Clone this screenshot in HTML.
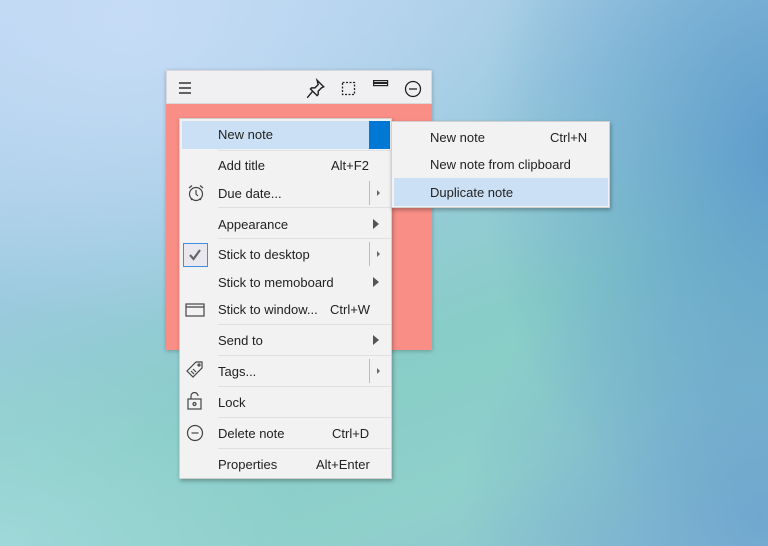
<!DOCTYPE html>
<html><head><meta charset="utf-8"><style>
*{margin:0;padding:0;box-sizing:border-box}
html,body{width:768px;height:546px;overflow:hidden}
body{position:relative;font-family:"Liberation Sans",sans-serif;font-size:13px;color:#222;
background:
radial-gradient(ellipse 420px 300px at 130px 20px,#c6dcf6 0%,rgba(198,220,246,0) 100%),
radial-gradient(ellipse 300px 400px at 780px 150px,#5f9ccc 0%,rgba(95,156,204,0) 100%),
radial-gradient(ellipse 300px 300px at 760px 520px,#72a8cf 0%,rgba(114,168,207,0) 100%),
radial-gradient(ellipse 300px 200px at 0px 546px,#9fd8d8 0%,rgba(159,216,216,0) 100%),
linear-gradient(160deg,#b9d3ef 0%,#9ccadf 35%,#88cdc7 60%,#8fd0cb 80%,#8cc0d2 100%);}
.a{position:absolute}
.win{left:166px;top:70px;width:266px;height:280px;background:#f98e86;box-shadow:0 1px 4px rgba(0,0,0,.25)}
.tb{left:0;top:0;width:266px;height:34px;background:#f0f0f2;border:1px solid #d8d8dc}
.menu{left:179px;top:118px;width:213px;height:361px;background:#f2f2f2;border:1px solid #d0d0d0;box-shadow:1px 2px 4px rgba(0,0,0,.3)}
.sub{left:391px;top:121px;width:219px;height:87px;background:#f2f2f2;border:1px solid #d0d0d0;box-shadow:1px 2px 4px rgba(0,0,0,.3)}
.t{position:absolute;line-height:16px;white-space:nowrap}
.sep{position:absolute;left:38px;width:173px;height:1px;background:#e0e0e0}
.vs{position:absolute;left:189px;width:1px;height:24px;background:#bcbcbc}
.arr{position:absolute;width:0;height:0;border-top:5px solid transparent;border-bottom:5px solid transparent;border-left:6px solid #555}
.sarr{position:absolute;width:0;height:0;border-top:3px solid transparent;border-bottom:3px solid transparent;border-left:3px solid #666}
</style></head><body>
<div class="a win">
 <div class="a tb">
  <svg class="a" style="left:11px;top:10px" width="14" height="14" viewBox="0 0 14 14" stroke="#333" stroke-width="1.5"><path d="M1 2h12M1 7h12M1 12h12"/></svg>
  <svg class="a" style="left:138px;top:7px" width="22" height="22" viewBox="0 0 20 20" fill="none" stroke="#222" stroke-width="1.3"><path d="M11 2l6 6-2 1-3 3 0 3-1 1-6-6 1-1 3 0 3-3z"/><path d="M7 12l-5 6"/></svg>
  <svg class="a" style="left:174px;top:10px" width="16" height="16" viewBox="0 0 16 16" fill="none" stroke="#222" stroke-width="1.3" stroke-dasharray="2 1.5"><rect x="1.5" y="1.5" width="12" height="12"/></svg>
  <svg class="a" style="left:206px;top:9px" width="16" height="8" viewBox="0 0 16 8" fill="none" stroke="#222" stroke-width="1.2"><rect x="0.6" y="0.6" width="14" height="5"/><path d="M1 3h13" stroke-width="2"/></svg>
  <svg class="a" style="left:237px;top:9px" width="18" height="18" viewBox="0 0 18 18" fill="none" stroke="#222" stroke-width="1.3"><circle cx="9" cy="9" r="7.5"/><path d="M5 9h8"/></svg>
 </div>
</div>

<div class="a menu">
 <div class="a" style="left:2px;top:2px;width:187px;height:28px;background:#cce0f5"></div>
 <div class="a" style="left:189px;top:2px;width:21px;height:28px;background:#0078d4"></div>
 <div class="t" style="left:38px;top:8px">New note</div>
 <div class="sep" style="top:31px"></div>
 <div class="t" style="left:38px;top:39px">Add title</div><div class="t" style="left:151px;top:39px">Alt+F2</div>
 <svg class="a" style="left:7px;top:65px" width="18" height="18" viewBox="0 0 18 18" fill="none" stroke="#444" stroke-width="1.2"><circle cx="9" cy="10" r="6.5"/><path d="M9 6v4l2 2M2 4l3-2.5M16 4l-3-2.5M4 16l1.5-1.5M14 16l-1.5-1.5"/></svg>
 <div class="t" style="left:38px;top:67px">Due date...</div>
 <div class="vs" style="top:62px"></div><div class="sarr" style="left:197px;top:71px"></div>
 <div class="sep" style="top:88px"></div>
 <div class="t" style="left:38px;top:98px">Appearance</div><div class="arr" style="left:193px;top:100px"></div>
 <div class="sep" style="top:119px"></div>
 <div class="a" style="left:3px;top:124px;width:25px;height:24px;background:#e8e8ee;border:1px solid #3d8ee0"></div>
 <svg class="a" style="left:7px;top:128px" width="16" height="16" viewBox="0 0 16 16" fill="none" stroke="#666" stroke-width="2.2"><path d="M3 8l3.5 4L13 3"/></svg>
 <div class="t" style="left:38px;top:128px">Stick to desktop</div>
 <div class="vs" style="top:123px"></div><div class="sarr" style="left:197px;top:132px"></div>
 <div class="t" style="left:38px;top:156px">Stick to memoboard</div><div class="arr" style="left:193px;top:158px"></div>
 <svg class="a" style="left:5px;top:183px" width="20" height="16" viewBox="0 0 20 16" fill="none" stroke="#444" stroke-width="1.2"><rect x="1" y="2" width="18" height="12"/><path d="M1 5h18"/></svg>
 <div class="t" style="left:38px;top:183px">Stick to window...</div><div class="t" style="left:150px;top:183px">Ctrl+W</div>
 <div class="sep" style="top:205px"></div>
 <div class="t" style="left:38px;top:214px">Send to</div><div class="arr" style="left:193px;top:216px"></div>
 <div class="sep" style="top:236px"></div>
 <svg class="a" style="left:6px;top:242px" width="18" height="18" viewBox="0 0 18 18" fill="none" stroke="#444" stroke-width="1.2"><path d="M10 1h6v6l-9 9-6-6z"/><circle cx="13" cy="4" r="1"/><path d="M5 10l3 3M7 8l3 3"/></svg>
 <div class="t" style="left:38px;top:245px">Tags...</div>
 <div class="vs" style="top:240px"></div><div class="sarr" style="left:197px;top:249px"></div>
 <div class="sep" style="top:267px"></div>
 <svg class="a" style="left:7px;top:273px" width="16" height="18" viewBox="0 0 16 18" fill="none" stroke="#444" stroke-width="1.2"><rect x="1" y="7" width="13" height="10"/><path d="M4 7V4a3.5 3.5 0 0 1 7 0"/><circle cx="7.5" cy="12" r="1.5"/></svg>
 <div class="t" style="left:38px;top:276px">Lock</div>
 <div class="sep" style="top:298px"></div>
 <svg class="a" style="left:6px;top:305px" width="18" height="18" viewBox="0 0 18 18" fill="none" stroke="#444" stroke-width="1.2"><circle cx="9" cy="9" r="7.5"/><path d="M5.5 9h7"/></svg>
 <div class="t" style="left:38px;top:307px">Delete note</div><div class="t" style="left:152px;top:307px">Ctrl+D</div>
 <div class="sep" style="top:329px"></div>
 <div class="t" style="left:38px;top:338px">Properties</div><div class="t" style="left:136px;top:338px">Alt+Enter</div>
</div>

<div class="a sub">
 <div class="t" style="left:38px;top:8px">New note</div><div class="t" style="left:158px;top:8px">Ctrl+N</div>
 <div class="t" style="left:38px;top:35px">New note from clipboard</div>
 <div class="a" style="left:2px;top:56px;width:214px;height:28px;background:#cce0f5"></div>
 <div class="t" style="left:38px;top:63px">Duplicate note</div>
</div>
</body></html>
